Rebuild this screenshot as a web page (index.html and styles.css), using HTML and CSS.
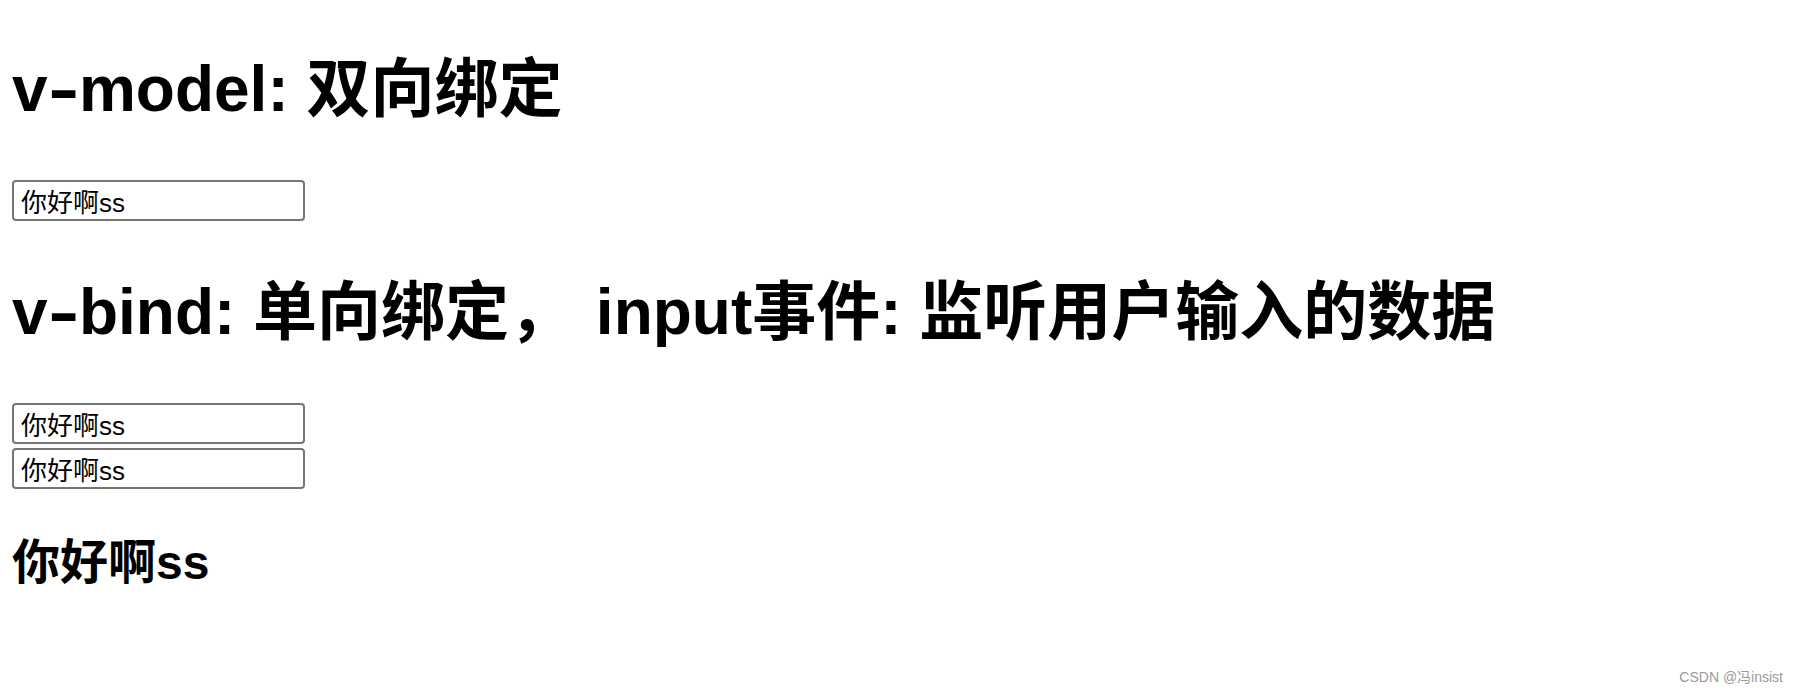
FILE: index.html
```html
<!DOCTYPE html>
<html lang="zh-CN">
<head>
  <meta charset="UTF-8" />
  <meta name="viewport" content="width=device-width, initial-scale=1.0"/>
  <title>Vue 数据绑定</title>
  <link rel="stylesheet" href="styles.css">
</head>
<body>
  <div id="app" class="app">
    <h1>v<span class="dash">-</span>model: 双向绑定</h1>
    <input class="text-input" type="text" value="你好啊ss" />

    <h1>v<span class="dash">-</span>bind: 单向绑定，<span class="gap">&nbsp;</span>input事件: 监听用户输入的数据</h1>
    <input class="text-input" type="text" value="你好啊ss" />
    <input class="text-input" type="text" value="你好啊ss" />

    <h2>你好啊ss</h2>
  </div>

  <div class="watermark">CSDN @冯insist</div>
</body>
</html>
```

FILE: styles.css
```css
* {
  box-sizing: border-box;
}

html, body {
  margin: 0;
  background: #fff;
}

body {
  font-family: "Liberation Sans", "Noto Sans CJK SC", sans-serif;
  color: #000;
  padding: 0 12px;
  min-height: 100vh;
  position: relative;
}

.app {
  display: flow-root;
}

h1 {
  font-size: 64px;
  line-height: 74px;
  font-weight: bold;
  margin: 54px 0;
}

.app h1:first-child {
  margin-top: 52px;
}

.dash {
  display: inline-block;
  transform: scaleX(1.45);
  margin: 0 5px;
}

.gap {
  margin-right: 5px;
}

h2 {
  font-size: 48px;
  line-height: 56px;
  font-weight: bold;
  margin: 46px 0 0;
}

.text-input {
  display: block;
  width: 293px;
  height: 41px;
  margin: 0 0 4px;
  padding: 0 7px;
  border: 2px solid #767676;
  border-radius: 4px;
  font-family: "Liberation Sans", "Noto Sans CJK SC", sans-serif;
  font-size: 26px;
  color: #000;
  background: #fff;
}

.text-input:last-of-type {
  margin-bottom: 0;
}

/* site watermark, bottom right corner */
.watermark {
  position: absolute;
  right: 15px;
  bottom: 8px;
  font-size: 14px;
  color: #9a9a9a;
}
```
